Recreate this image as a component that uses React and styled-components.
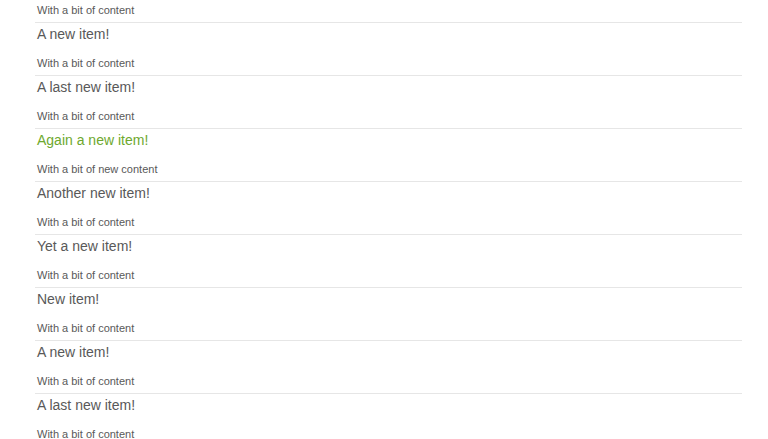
import React from "react";
import styled, { createGlobalStyle } from "styled-components";

const Global = createGlobalStyle`
  html, body { margin: 0; padding: 0; background: #ffffff; overflow: hidden; }
  body { font-family: "Liberation Sans", Arial, sans-serif; }
`;

const Page = styled.div`
  width: 768px;
  height: 439px;
  overflow: hidden;
  background: #fff;
`;

const List = styled.ul`
  list-style: none;
  margin: -30px 0 0 35px;
  padding: 0;
  width: 707px;
`;

const Item = styled.li`
  padding: 1px 0 5px 2px;
  border-bottom: 1px solid #e6e6e6;
`;

const Title = styled.div`
  font-size: 14px;
  line-height: 20px;
  height: 20px;
  color: ${(p) => (p.$active ? "#6ea82e" : "#595959")};
`;

const Sub = styled.div`
  margin-top: 12px;
  font-size: 11px;
  line-height: 14px;
  color: #595959;
`;

const items = [
  { t: "New item!", s: "With a bit of content" },
  { t: "A new item!", s: "With a bit of content" },
  { t: "A last new item!", s: "With a bit of content" },
  { t: "Again a new item!", s: "With a bit of new content", active: true },
  { t: "Another new item!", s: "With a bit of content" },
  { t: "Yet a new item!", s: "With a bit of content" },
  { t: "New item!", s: "With a bit of content" },
  { t: "A new item!", s: "With a bit of content" },
  { t: "A last new item!", s: "With a bit of content" },
];

export default function App() {
  return (
    <Page>
      <Global />
      <List>
        {items.map((it, i) => (
          <Item key={i}>
            <Title $active={it.active}>{it.t}</Title>
            <Sub>{it.s}</Sub>
          </Item>
        ))}
      </List>
    </Page>
  );
}
